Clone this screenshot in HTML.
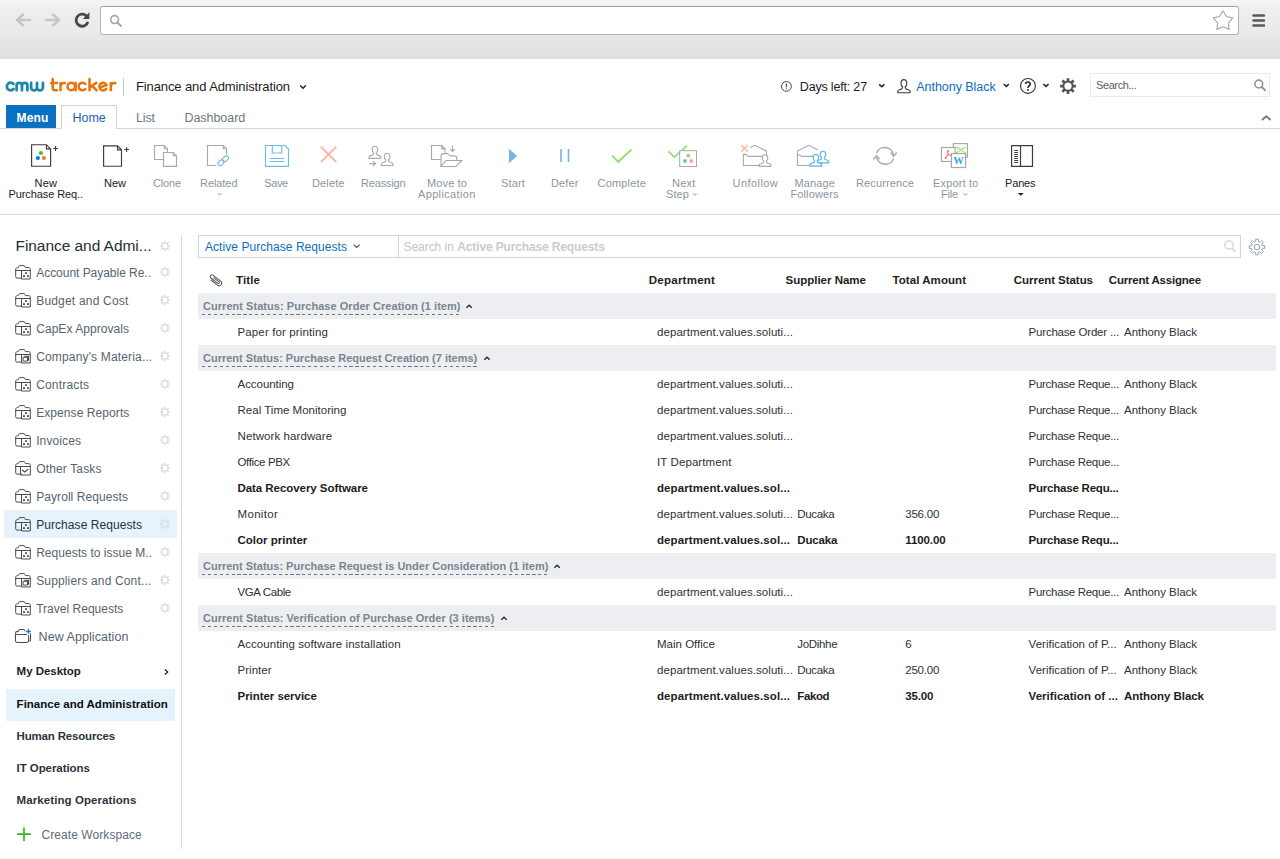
<!DOCTYPE html>
<html><head><meta charset="utf-8"><title>CMW Tracker</title>
<style>
html,body{margin:0;padding:0;}
body{width:1280px;height:859px;position:relative;overflow:hidden;background:#fff;font-family:"Liberation Sans",sans-serif;}
.t{position:absolute;white-space:nowrap;font-family:"Liberation Sans",sans-serif;}
.a{position:absolute;}
svg{position:absolute;overflow:visible;}
#chrome{left:0;top:0;width:1280px;height:59px;background:linear-gradient(#f6f6f6 0px,#f3f3f3 5px,#eeeeee 7px,#ebebeb 30px,#e4e4e4 42px,#e0e0e0 59px);}
#url{left:100px;top:6px;width:1136.5px;height:27px;background:#fff;border:1px solid #b4b4b4;border-top-color:#a2a2a2;border-radius:3px;}
.grp{left:198px;width:1078px;height:26px;background:#edeef2;}
.dash{height:1px;background:repeating-linear-gradient(90deg,#70767c 0,#70767c 3.2px,transparent 3.2px,transparent 5.9px);}
.hl{background:#e6f3fc;}

</style></head><body>
<div class="a" id="chrome"></div>
<div class="a" id="url"></div>
<svg style="left:14px;top:12px" width="18" height="16" viewBox="0 0 18 16"><path d="M9 2.5 L3 8 L9 13.5 M3.2 8 H16" fill="none" stroke="#c6c6c6" stroke-width="2.5" stroke-linecap="round" stroke-linejoin="round"/></svg>
<svg style="left:44px;top:12px" width="18" height="16" viewBox="0 0 18 16"><path d="M9 2.5 L15 8 L9 13.5 M14.8 8 H2" fill="none" stroke="#c6c6c6" stroke-width="2.5" stroke-linecap="round" stroke-linejoin="round"/></svg>
<svg style="left:72.6px;top:11.3px" width="18" height="18" viewBox="0 0 18 18"><path d="M13.4 5.0 A6 6 0 1 0 14.9 10.8" fill="none" stroke="#474747" stroke-width="2.8"/><path d="M9.8 7.9 L16.4 7.9 L16.4 1.3 Z" fill="#474747"/></svg>
<svg style="left:109px;top:14px" width="14" height="14" viewBox="0 0 14 14"><circle cx="5.6" cy="5.6" r="3.9" fill="none" stroke="#a9a9a9" stroke-width="1.7"/><path d="M8.6 8.6 L12 12" stroke="#a9a9a9" stroke-width="2" stroke-linecap="round"/></svg>
<svg style="left:1212px;top:9px" width="22" height="22" viewBox="0 0 22 22"><path d="M11.0 1.8 L14.4 7.5 L20.8 8.9 L16.4 13.9 L17.1 20.4 L11.0 17.8 L4.9 20.4 L5.6 13.9 L1.2 8.9 L7.6 7.5 Z" fill="#fff" stroke="#a6abaf" stroke-width="1.15" stroke-linejoin="round"/></svg>
<svg style="left:1252px;top:13px" width="14" height="14" viewBox="0 0 14 14"><path d="M1.5 2.5 H11.9 M1.5 7.5 H11.9 M1.5 12.5 H11.9" stroke="#595959" stroke-width="2.6" stroke-linecap="round"/></svg>
<svg style="left:0;top:72px" width="130" height="30" viewBox="0 72 130 30" fill="none" stroke-width="2.55" stroke-linecap="round" stroke-linejoin="round"><g stroke="#1b8aa9" stroke-width="2.75"><path d="M13.5 84 A3.8 3.8 0 1 0 13.5 89"/><path d="M16.6 90.3 V85.5 A2.7 2.7 0 0 1 22 85.5 V90.3 M22 85.5 A2.7 2.7 0 0 1 27.4 85.5 V90.3"/><path d="M31.1 82.8 V87.4 A2.95 2.95 0 0 0 37 87.4 V82.8 M37 87.4 A2.95 2.95 0 0 0 42.9 87.4 V82.8"/></g><g stroke="#e9730e"><path d="M52.7 79 V87.8 A2.5 2.5 0 0 0 55.2 90.3 H56.8 M51.2 83 H57"/><path d="M60.5 90.3 V82.9 M60.5 86.6 C60.5 84.2 62.4 82.6 65 83.1"/><circle cx="71.3" cy="86.5" r="3.8"/><path d="M75.6 82.8 V90.3"/><path d="M85.3 84 A3.8 3.8 0 1 0 85.3 89"/><path d="M89.5 79 V90.3 M96.3 82.9 L90 87.1 M92.3 85.9 L96.6 90.3"/><path d="M99.7 87.6 L106.6 85.1 A3.8 3.8 0 1 0 106.3 88.8"/><path d="M110.8 90.3 V82.9 M110.8 86.6 C110.8 84.2 112.7 82.6 115.3 83.1"/></g></svg>
<div class="a" style="left:123px;top:78px;width:1px;height:18px;background:#c9c9c9"></div>
<svg style="left:299px;top:84px" width="8" height="6" viewBox="0 0 8 6"><path d="M1.2 1.5 L4 4.2 L6.8 1.5" fill="none" stroke="#222" stroke-width="1.5"/></svg>
<div class="a" style="left:1090px;top:73px;width:178px;height:22px;border:1px solid #e0ebf7;background:#fff"></div>
<svg style="left:770px;top:70px" width="510" height="60" viewBox="770 70 510 60" fill="none"><circle cx="786.4" cy="86.4" r="4.9" stroke="#444" stroke-width="1"/><path d="M786.4 83.5 V87.3 M786.4 88.6 V89.6" stroke="#444" stroke-width="1.1"/><path d="M879.2 84.4 L881.8 86.8 L884.4 84.4" stroke="#222" stroke-width="1.5"/><path d="M1003.7 84 L1006.3 86.4 L1008.9 84" stroke="#222" stroke-width="1.5"/><path d="M1043.4 84 L1046 86.4 L1048.6 84" stroke="#222" stroke-width="1.5"/><g transform="translate(903.9 79.7) scale(1.04 1.07)"><path d="M-1.4 7.4 v-1 c-0.9 -0.6 -1.4 -1.8 -1.4 -3.1 c0 -1.9 1.1 -3.3 2.8 -3.3 s2.8 1.4 2.8 3.3 c0 1.3 -0.5 2.5 -1.4 3.1 v1 c0 0.9 0.6 1.3 1.6 1.6 l1.4 0.4 c1 0.3 1.5 0.8 1.5 1.7 v1.1 h-11.8 v-1.1 c0 -0.9 0.5 -1.4 1.5 -1.7 l1.4 -0.4 c1 -0.3 1.6 -0.7 1.6 -1.6 z" stroke="#3a3a3a" stroke-width="1.1"/></g><circle cx="1027.95" cy="85.95" r="7.4" stroke="#333" stroke-width="1.1"/><path d="M1025.6 84.1 C1025.6 81.3 1030.2 81.3 1030.2 84 C1030.2 85.9 1027.9 86 1027.9 88.1" stroke="#2e2e2e" stroke-width="1.7"/><circle cx="1027.9" cy="90.1" r="1" fill="#2e2e2e"/><g transform="translate(1068 86.1)" stroke="#505050"><circle r="4.6" stroke-width="1.9"/><path d="M0 -7.9 V-5 M0 7.9 V5 M-7.9 0 H-5 M7.9 0 H5 M-5.6 -5.6 L-3.55 -3.55 M5.6 5.6 L3.55 3.55 M-5.6 5.6 L-3.55 3.55 M5.6 -5.6 L3.55 -3.55" stroke-width="2.7"/></g><circle cx="1258.8" cy="84" r="3.9" stroke="#959595" stroke-width="1.6"/><path d="M1261.8 87 L1265 90.3" stroke="#959595" stroke-width="2" stroke-linecap="round"/><path d="M1262 120 L1266.3 116.3 L1270.6 120" stroke="#7a7a7a" stroke-width="2"/></svg>
<div class="a" style="left:0;top:128px;width:1280px;height:1px;background:#cfd8de"></div>
<div class="a" style="left:6px;top:105.3px;width:50px;height:22.7px;background:#0b70c0"></div>
<div class="a" style="left:61px;top:105px;width:54px;height:23px;border:1px solid #c9d4db;border-bottom:none;background:#fff"></div>
<div class="a" style="left:0;top:214px;width:1280px;height:1px;background:#d4dce1"></div>
<svg style="left:0;top:129px" width="1280" height="86" viewBox="0 129 1280 86" fill="none" stroke-linejoin="miter"><path d="M216.7 193.3 h6 l-3 2.5 z" fill="#c4cace"/><path d="M692 193.5 h6 l-3 2.6 z" fill="#c4cace"/><path d="M962.5 193.5 h6 l-3 2.6 z" fill="#c4cace"/><path d="M1017.6 193.1 h6.2 l-3.1 2.6 z" fill="#222"/><path d="M31.6 144.7 H46.4 L50.6 148.9 V166.2 H31.6 Z M46.4 144.7 V148.9 H50.6" stroke="#3d3d3d" stroke-width="1.15"/><path d="M53.1 148.5 h4.9 M55.55 146 v5" stroke="#3d3d3d" stroke-width="1.05"/><circle cx="40.9" cy="153" r="2.1" fill="#40c41c"/><circle cx="37.9" cy="158" r="2.1" fill="#0b80ca"/><circle cx="43.9" cy="158" r="2.1" fill="#e97b42"/><path d="M103.6 145.8 H117.5 L121.5 149.8 V166.2 H103.6 Z M117.5 145.8 V149.8 H121.5" stroke="#3d3d3d" stroke-width="1.15"/><path d="M124.2 149.5 h4.9 M126.65 147 v5" stroke="#3d3d3d" stroke-width="1.05"/><path d="M154.5 145.5 H164.3 L167.5 148.7 V159.5 H154.5 Z M164.3 145.5 V148.7 H167.5" stroke="#a9a9a9" stroke-width="1.15"/><path d="M163.5 152.5 H173.3 L176.5 155.7 V166.4 H163.5 Z M173.3 152.5 V155.7 H176.5" stroke="#a9a9a9" stroke-width="1.15" fill="#fff"/><path d="M216 165.5 H207.5 V145.5 H223.3 L226.5 148.7 V154.5 M223.3 145.5 V148.7 H226.5" stroke="#a9a9a9" stroke-width="1.15"/><g stroke="#5ab4ea" stroke-width="0.95"><rect x="217.6" y="160.5" width="6.6" height="4.4" rx="2.2" transform="rotate(-42 220.9 162.7)"/><rect x="222.1" y="156.6" width="6.6" height="4.4" rx="2.2" transform="rotate(-42 225.4 158.8)"/></g><path d="M265.5 145.5 H285 L288.5 149.2 V166.3 H265.5 Z" stroke="#6dbdea" stroke-width="1.15"/><path d="M272.3 145.5 V153 H281.7 V145.5 M269.8 158.5 H284.1 M269.8 161.5 H284.1" stroke="#6dbdea" stroke-width="1.1"/><path d="M320.9 146.7 L336.3 162.1 M336.3 146.7 L320.9 162.1" stroke="#fcb59e" stroke-width="1.9"/><g stroke="#a9a9a9" stroke-width="1.1"><path d="M373.55 153.6 v-1 c-0.9 -0.6 -1.4 -1.8 -1.4 -3.1 c0 -1.9 1.1 -3.3 2.8 -3.3 s2.8 1.4 2.8 3.3 c0 1.3 -0.5 2.5 -1.4 3.1 v1 c0 0.9 0.6 1.3 1.6 1.6 l1.4 0.4 c1 0.3 1.5 0.8 1.5 1.7 v1.1 h-11.8 v-1.1 c0 -0.9 0.5 -1.4 1.5 -1.7 l1.4 -0.4 c1 -0.3 1.6 -0.7 1.6 -1.6 z"/><path d="M385.7 160.7 v-1 c-0.9 -0.6 -1.4 -1.8 -1.4 -3.1 c0 -1.9 1.1 -3.3 2.8 -3.3 s2.8 1.4 2.8 3.3 c0 1.3 -0.5 2.5 -1.4 3.1 v1 c0 0.9 0.6 1.3 1.6 1.6 l1.4 0.4 c1 0.3 1.5 0.8 1.5 1.7 v1.1 h-11.8 v-1.1 c0 -0.9 0.5 -1.4 1.5 -1.7 l1.4 -0.4 c1 -0.3 1.6 -0.7 1.6 -1.6 z"/><path d="M369.2 163.6 h6.4 M373 161.2 l2.6 2.4 l-2.6 2.4"/></g><g stroke="#a9a9a9" stroke-width="1.15"><path d="M441 159.5 H431.5 V145.5 H441.7 L445 148.8 V152.8 M441.7 145.5 V148.8 H445"/><path d="M441 166.5 V156.5 C441 154.6 442.4 153.6 444 153.6 H447 C448.6 153.6 448.8 155.9 450.4 155.9 H454.5 C456 155.9 456.8 156.8 456.8 158.4 V160.3" fill="#fff"/><path d="M441 166.5 L445.8 160.5 H461.8 L455.8 166.5 Z" fill="#fff"/><path d="M452.5 145.5 V151.3 M450.2 149.2 L452.5 151.5 L454.8 149.2"/></g><path d="M509 149 L517.2 156 L509 163 Z" fill="#6db8e4"/><path d="M561 149 V162 M568.5 149 V162" stroke="#6db8e4" stroke-width="1.6"/><path d="M612.2 155.6 L618.2 161.8 L631.4 149.6" stroke="#90de6c" stroke-width="1.9"/><path d="M668.3 151.4 L674.4 157.2 L687.2 145.6" stroke="#90de6c" stroke-width="1.7"/><rect x="679.7" y="150.7" width="16.8" height="15.8" fill="#fff" stroke="#a9a9a9" stroke-width="1"/><circle cx="688.2" cy="155.7" r="1.9" fill="#8fdd6c"/><circle cx="685" cy="161" r="1.9" fill="#6db8e4"/><circle cx="691.3" cy="161" r="1.9" fill="#f8a98f"/><path d="M741.2 145.2 l6.6 6.6 M747.8 145.2 l-6.6 6.6" stroke="#fbb29a" stroke-width="1.3"/><g stroke="#a9a9a9" stroke-width="1.1"><path d="M750.2 147.6 L754.9 145.3 L766.5 151.2 V155"/><path d="M760 165.5 H743.4 V154.4 H745.9 L748.4 156.4 H762"/><path d="M765 154.8 m-1.4 7 v-0.9 c-0.9 -0.6 -1.4 -1.7 -1.4 -3 c0 -1.8 1.1 -3.1 2.8 -3.1 s2.8 1.3 2.8 3.1 c0 1.3 -0.5 2.4 -1.4 3 v0.9 c0 0.9 0.6 1.2 1.6 1.5 l1.4 0.4 c1 0.3 1.5 0.8 1.5 1.7 v1 h-11.8 v-1 c0 -0.9 0.5 -1.4 1.5 -1.7 l1.4 -0.4 c1 -0.3 1.6 -0.6 1.6 -1.5 z" fill="#fff"/></g><g stroke="#a9a9a9" stroke-width="1.1"><path d="M817.8 150 L808.9 145.3 L797.4 151 V165.5 H811"/><path d="M797.4 154.3 L802.2 156.4 H813.5"/></g><g stroke="#5db2e8" stroke-width="1.1" fill="#fff"><path d="M823 151.3 m-1.4 7 v-0.9 c-0.9 -0.6 -1.4 -1.7 -1.4 -3 c0 -1.8 1.1 -3.1 2.8 -3.1 s2.8 1.3 2.8 3.1 c0 1.3 -0.5 2.4 -1.4 3 v0.9 c0 0.9 0.6 1.2 1.6 1.5 l1.4 0.4 c1 0.3 1.5 0.8 1.5 1.7 v1 h-11.8 v-1 c0 -0.9 0.5 -1.4 1.5 -1.7 l1.4 -0.4 c1 -0.3 1.6 -0.6 1.6 -1.5 z"/><path d="M815.9 154.5 m-1.4 7 v-0.9 c-0.9 -0.6 -1.4 -1.7 -1.4 -3 c0 -1.8 1.1 -3.1 2.8 -3.1 s2.8 1.3 2.8 3.1 c0 1.3 -0.5 2.4 -1.4 3 v0.9 c0 0.9 0.6 1.2 1.6 1.5 l1.4 0.4 c1 0.3 1.5 0.8 1.5 1.7 v1 h-11.8 v-1 c0 -0.9 0.5 -1.4 1.5 -1.7 l1.4 -0.4 c1 -0.3 1.6 -0.6 1.6 -1.5 z"/></g><g stroke="#adb1b4" stroke-width="1.6"><path d="M876.4 153.2 A9 9 0 0 1 893.7 155.6 M893.6 158.6 A9 9 0 0 1 876.3 156.2"/><path d="M890.6 152.6 L893.7 156.2 L896.8 152.6 M873.3 159.2 L876.4 155.6 L879.6 159.2"/></g><rect x="953.4" y="143.6" width="14" height="13.6" fill="#fff" stroke="#a9a9a9" stroke-width="1.2"/><path d="M956.6 147.4 L964.8 152.8 M964.8 147.4 L956.6 152.8 M955.8 147.3 h2.4 M963.4 147.3 h2.4 M955.8 152.9 h2.4 M963.4 152.9 h2.4" stroke="#9be27a" stroke-width="1.3"/><rect x="941.5" y="147.5" width="13.6" height="14" fill="#fff" stroke="#a9a9a9" stroke-width="1.2"/><path d="M947.9 150.8 V154.3 L945.5 158.2 M947.9 154.3 L951 155.7" stroke="#f26d6d" stroke-width="1.1" fill="none"/><circle cx="947.9" cy="150.9" r="0.9" fill="#f26d6d"/><circle cx="945.6" cy="158.1" r="1" fill="#f26d6d"/><rect x="951.4" y="153.6" width="14.2" height="13.9" fill="#fff" stroke="#a9a9a9" stroke-width="1.2"/><path d="M1011.6 145.6 H1032.5 V166.4 H1011.6 Z M1020.5 145.6 V166.4" stroke="#3d3d3d" stroke-width="1.2"/><path d="M1014.2 150.5 h3.9 M1014.2 152.5 h3.9 M1014.2 154.5 h3.9 M1014.2 156.5 h3.9 M1014.2 158.5 h3.9 M1014.2 160.5 h3.9 M1014.2 162.5 h3.9" stroke="#3d3d3d" stroke-width="1"/></svg>
<div class="a" style="left:181px;top:235px;width:1px;height:614px;background:#d0d6da"></div>
<div class="a hl" style="left:4px;top:510px;width:173px;height:28px"></div>
<div class="a hl" style="left:6px;top:689px;width:169px;height:32px"></div>
<svg style="left:0;top:235px" width="181" height="624" viewBox="0 235 181 624"><g transform="translate(165 246)" fill="none" stroke="#dcdcdc"><circle r="3.1" stroke-width="1.3"/><path d="M0 -5.2 V-3.4 M0 5.2 V3.4 M-5.2 0 H-3.4 M5.2 0 H3.4 M-3.7 -3.7 L-2.4 -2.4 M3.7 3.7 L2.4 2.4 M-3.7 3.7 L-2.4 2.4 M3.7 -3.7 L2.4 -2.4" stroke-width="1.5"/></g><g transform="translate(15.2 265.10)" fill="none" stroke="#4b4b4b" stroke-width="1" stroke-linejoin="round" stroke-linecap="round"><path d="M0.5 5.4 V4.3 C0.5 3.2 1.2 2.5 2.3 2.5 H2.9 C4 2.5 3.3 0.5 4.7 0.5 H8.7 C10.1 0.5 9.4 2.5 10.5 2.5 H13.4 C14.5 2.5 15.1 3.2 15.1 4.3 V5.4"/><path d="M0.5 5.4 H15.1"/><path d="M0.5 5.4 V11.6 C0.5 12.5 1 13 1.9 13 H6.3"/><path d="M6.3 5.4 V13.9 H15.1 V5.4"/><g fill="#333" stroke="none"><rect x="9.9" y="7.1" width="1.8" height="1.8" rx="0.4"/><rect x="7.9" y="10.1" width="1.8" height="1.8" rx="0.4"/><rect x="11.9" y="10.1" width="1.8" height="1.8" rx="0.4"/></g></g><g transform="translate(165 272)" fill="none" stroke="#dcdcdc"><circle r="3.1" stroke-width="1.3"/><path d="M0 -5.2 V-3.4 M0 5.2 V3.4 M-5.2 0 H-3.4 M5.2 0 H3.4 M-3.7 -3.7 L-2.4 -2.4 M3.7 3.7 L2.4 2.4 M-3.7 3.7 L-2.4 2.4 M3.7 -3.7 L2.4 -2.4" stroke-width="1.5"/></g><g transform="translate(15.2 293.10)" fill="none" stroke="#4b4b4b" stroke-width="1" stroke-linejoin="round" stroke-linecap="round"><path d="M0.5 5.4 V4.3 C0.5 3.2 1.2 2.5 2.3 2.5 H2.9 C4 2.5 3.3 0.5 4.7 0.5 H8.7 C10.1 0.5 9.4 2.5 10.5 2.5 H13.4 C14.5 2.5 15.1 3.2 15.1 4.3 V5.4"/><path d="M0.5 5.4 H15.1"/><path d="M0.5 5.4 V11.6 C0.5 12.5 1 13 1.9 13 H6.3"/><path d="M6.3 5.4 V13.9 H15.1 V5.4"/><g fill="#333" stroke="none"><rect x="9.9" y="7.1" width="1.8" height="1.8" rx="0.4"/><rect x="7.9" y="10.1" width="1.8" height="1.8" rx="0.4"/><rect x="11.9" y="10.1" width="1.8" height="1.8" rx="0.4"/></g></g><g transform="translate(165 300)" fill="none" stroke="#dcdcdc"><circle r="3.1" stroke-width="1.3"/><path d="M0 -5.2 V-3.4 M0 5.2 V3.4 M-5.2 0 H-3.4 M5.2 0 H3.4 M-3.7 -3.7 L-2.4 -2.4 M3.7 3.7 L2.4 2.4 M-3.7 3.7 L-2.4 2.4 M3.7 -3.7 L2.4 -2.4" stroke-width="1.5"/></g><g transform="translate(15.2 321.10)" fill="none" stroke="#4b4b4b" stroke-width="1" stroke-linejoin="round" stroke-linecap="round"><path d="M0.5 5.4 V4.3 C0.5 3.2 1.2 2.5 2.3 2.5 H2.9 C4 2.5 3.3 0.5 4.7 0.5 H8.7 C10.1 0.5 9.4 2.5 10.5 2.5 H13.4 C14.5 2.5 15.1 3.2 15.1 4.3 V5.4"/><path d="M0.5 5.4 H15.1"/><path d="M0.5 5.4 V11.6 C0.5 12.5 1 13 1.9 13 H6.3"/><path d="M6.3 5.4 V13.9 H15.1 V5.4"/><g fill="#333" stroke="none"><rect x="9.9" y="7.1" width="1.8" height="1.8" rx="0.4"/><rect x="7.9" y="10.1" width="1.8" height="1.8" rx="0.4"/><rect x="11.9" y="10.1" width="1.8" height="1.8" rx="0.4"/></g></g><g transform="translate(165 328)" fill="none" stroke="#dcdcdc"><circle r="3.1" stroke-width="1.3"/><path d="M0 -5.2 V-3.4 M0 5.2 V3.4 M-5.2 0 H-3.4 M5.2 0 H3.4 M-3.7 -3.7 L-2.4 -2.4 M3.7 3.7 L2.4 2.4 M-3.7 3.7 L-2.4 2.4 M3.7 -3.7 L2.4 -2.4" stroke-width="1.5"/></g><g transform="translate(15.2 349.10)" fill="none" stroke="#4b4b4b" stroke-width="1" stroke-linejoin="round" stroke-linecap="round"><path d="M0.5 5.4 V4.3 C0.5 3.2 1.2 2.5 2.3 2.5 H2.9 C4 2.5 3.3 0.5 4.7 0.5 H8.7 C10.1 0.5 9.4 2.5 10.5 2.5 H13.4 C14.5 2.5 15.1 3.2 15.1 4.3 V5.4"/><path d="M0.5 5.4 H15.1"/><path d="M0.5 5.4 V11.6 C0.5 12.5 1 13 1.9 13 H6.3"/><path d="M6.3 5.4 V13.9 H15.1 V5.4"/><path d="M8.3 8.2 H12.3 V12 H8.3 Z" stroke-width="1"/><path d="M9.3 7.2 H13.3 V11.2" stroke-width="1.1" stroke-linejoin="miter"/><path d="M12.8 7.6 V11.4" stroke-width="0.9"/></g><g transform="translate(165 356)" fill="none" stroke="#dcdcdc"><circle r="3.1" stroke-width="1.3"/><path d="M0 -5.2 V-3.4 M0 5.2 V3.4 M-5.2 0 H-3.4 M5.2 0 H3.4 M-3.7 -3.7 L-2.4 -2.4 M3.7 3.7 L2.4 2.4 M-3.7 3.7 L-2.4 2.4 M3.7 -3.7 L2.4 -2.4" stroke-width="1.5"/></g><g transform="translate(15.2 377.10)" fill="none" stroke="#4b4b4b" stroke-width="1" stroke-linejoin="round" stroke-linecap="round"><path d="M0.5 5.4 V4.3 C0.5 3.2 1.2 2.5 2.3 2.5 H2.9 C4 2.5 3.3 0.5 4.7 0.5 H8.7 C10.1 0.5 9.4 2.5 10.5 2.5 H13.4 C14.5 2.5 15.1 3.2 15.1 4.3 V5.4"/><path d="M0.5 5.4 H15.1"/><path d="M0.5 5.4 V11.6 C0.5 12.5 1 13 1.9 13 H6.3"/><path d="M6.3 5.4 V13.9 H15.1 V5.4"/><g fill="#333" stroke="none"><rect x="9.9" y="7.1" width="1.8" height="1.8" rx="0.4"/><rect x="7.9" y="10.1" width="1.8" height="1.8" rx="0.4"/><rect x="11.9" y="10.1" width="1.8" height="1.8" rx="0.4"/></g></g><g transform="translate(165 384)" fill="none" stroke="#dcdcdc"><circle r="3.1" stroke-width="1.3"/><path d="M0 -5.2 V-3.4 M0 5.2 V3.4 M-5.2 0 H-3.4 M5.2 0 H3.4 M-3.7 -3.7 L-2.4 -2.4 M3.7 3.7 L2.4 2.4 M-3.7 3.7 L-2.4 2.4 M3.7 -3.7 L2.4 -2.4" stroke-width="1.5"/></g><g transform="translate(15.2 405.10)" fill="none" stroke="#4b4b4b" stroke-width="1" stroke-linejoin="round" stroke-linecap="round"><path d="M0.5 5.4 V4.3 C0.5 3.2 1.2 2.5 2.3 2.5 H2.9 C4 2.5 3.3 0.5 4.7 0.5 H8.7 C10.1 0.5 9.4 2.5 10.5 2.5 H13.4 C14.5 2.5 15.1 3.2 15.1 4.3 V5.4"/><path d="M0.5 5.4 H15.1"/><path d="M0.5 5.4 V11.6 C0.5 12.5 1 13 1.9 13 H6.3"/><path d="M6.3 5.4 V13.9 H15.1 V5.4"/><g fill="#333" stroke="none"><rect x="9.9" y="7.1" width="1.8" height="1.8" rx="0.4"/><rect x="7.9" y="10.1" width="1.8" height="1.8" rx="0.4"/><rect x="11.9" y="10.1" width="1.8" height="1.8" rx="0.4"/></g></g><g transform="translate(165 412)" fill="none" stroke="#dcdcdc"><circle r="3.1" stroke-width="1.3"/><path d="M0 -5.2 V-3.4 M0 5.2 V3.4 M-5.2 0 H-3.4 M5.2 0 H3.4 M-3.7 -3.7 L-2.4 -2.4 M3.7 3.7 L2.4 2.4 M-3.7 3.7 L-2.4 2.4 M3.7 -3.7 L2.4 -2.4" stroke-width="1.5"/></g><g transform="translate(15.2 433.10)" fill="none" stroke="#4b4b4b" stroke-width="1" stroke-linejoin="round" stroke-linecap="round"><path d="M0.5 5.4 V4.3 C0.5 3.2 1.2 2.5 2.3 2.5 H2.9 C4 2.5 3.3 0.5 4.7 0.5 H8.7 C10.1 0.5 9.4 2.5 10.5 2.5 H13.4 C14.5 2.5 15.1 3.2 15.1 4.3 V5.4"/><path d="M0.5 5.4 H15.1"/><path d="M0.5 5.4 V11.6 C0.5 12.5 1 13 1.9 13 H6.3"/><path d="M6.3 5.4 V13.9 H15.1 V5.4"/><g fill="#333" stroke="none"><rect x="9.9" y="7.1" width="1.8" height="1.8" rx="0.4"/><rect x="7.9" y="10.1" width="1.8" height="1.8" rx="0.4"/><rect x="11.9" y="10.1" width="1.8" height="1.8" rx="0.4"/></g></g><g transform="translate(165 440)" fill="none" stroke="#dcdcdc"><circle r="3.1" stroke-width="1.3"/><path d="M0 -5.2 V-3.4 M0 5.2 V3.4 M-5.2 0 H-3.4 M5.2 0 H3.4 M-3.7 -3.7 L-2.4 -2.4 M3.7 3.7 L2.4 2.4 M-3.7 3.7 L-2.4 2.4 M3.7 -3.7 L2.4 -2.4" stroke-width="1.5"/></g><g transform="translate(15.2 461.10)" fill="none" stroke="#4b4b4b" stroke-width="1" stroke-linejoin="round" stroke-linecap="round"><path d="M0.5 5.4 V4.3 C0.5 3.2 1.2 2.5 2.3 2.5 H2.9 C4 2.5 3.3 0.5 4.7 0.5 H8.7 C10.1 0.5 9.4 2.5 10.5 2.5 H13.4 C14.5 2.5 15.1 3.2 15.1 4.3 V5.4"/><path d="M0.5 5.4 H15.1"/><path d="M0.5 5.4 V11.6 C0.5 12.5 1 13 1.9 13 H6.3"/><path d="M5.3 5.4 V13.9 H15.1 V5.4"/><path d="M7.2 8.9 L9.5 10.9 L12.8 8.2" stroke-width="1.1"/></g><g transform="translate(165 468)" fill="none" stroke="#dcdcdc"><circle r="3.1" stroke-width="1.3"/><path d="M0 -5.2 V-3.4 M0 5.2 V3.4 M-5.2 0 H-3.4 M5.2 0 H3.4 M-3.7 -3.7 L-2.4 -2.4 M3.7 3.7 L2.4 2.4 M-3.7 3.7 L-2.4 2.4 M3.7 -3.7 L2.4 -2.4" stroke-width="1.5"/></g><g transform="translate(15.2 489.10)" fill="none" stroke="#4b4b4b" stroke-width="1" stroke-linejoin="round" stroke-linecap="round"><path d="M0.5 5.4 V4.3 C0.5 3.2 1.2 2.5 2.3 2.5 H2.9 C4 2.5 3.3 0.5 4.7 0.5 H8.7 C10.1 0.5 9.4 2.5 10.5 2.5 H13.4 C14.5 2.5 15.1 3.2 15.1 4.3 V5.4"/><path d="M0.5 5.4 H15.1"/><path d="M0.5 5.4 V11.6 C0.5 12.5 1 13 1.9 13 H6.3"/><path d="M6.3 5.4 V13.9 H15.1 V5.4"/><g fill="#333" stroke="none"><rect x="9.9" y="7.1" width="1.8" height="1.8" rx="0.4"/><rect x="7.9" y="10.1" width="1.8" height="1.8" rx="0.4"/><rect x="11.9" y="10.1" width="1.8" height="1.8" rx="0.4"/></g></g><g transform="translate(165 496)" fill="none" stroke="#dcdcdc"><circle r="3.1" stroke-width="1.3"/><path d="M0 -5.2 V-3.4 M0 5.2 V3.4 M-5.2 0 H-3.4 M5.2 0 H3.4 M-3.7 -3.7 L-2.4 -2.4 M3.7 3.7 L2.4 2.4 M-3.7 3.7 L-2.4 2.4 M3.7 -3.7 L2.4 -2.4" stroke-width="1.5"/></g><g transform="translate(15.2 517.10)" fill="none" stroke="#4b4b4b" stroke-width="1" stroke-linejoin="round" stroke-linecap="round"><path d="M0.5 5.4 V4.3 C0.5 3.2 1.2 2.5 2.3 2.5 H2.9 C4 2.5 3.3 0.5 4.7 0.5 H8.7 C10.1 0.5 9.4 2.5 10.5 2.5 H13.4 C14.5 2.5 15.1 3.2 15.1 4.3 V5.4"/><path d="M0.5 5.4 H15.1"/><path d="M0.5 5.4 V11.6 C0.5 12.5 1 13 1.9 13 H6.3"/><path d="M6.3 5.4 V13.9 H15.1 V5.4"/><g fill="#333" stroke="none"><rect x="9.9" y="7.1" width="1.8" height="1.8" rx="0.4"/><rect x="7.9" y="10.1" width="1.8" height="1.8" rx="0.4"/><rect x="11.9" y="10.1" width="1.8" height="1.8" rx="0.4"/></g></g><g transform="translate(165 524)" fill="none" stroke="#dcdcdc"><circle r="3.1" stroke-width="1.3"/><path d="M0 -5.2 V-3.4 M0 5.2 V3.4 M-5.2 0 H-3.4 M5.2 0 H3.4 M-3.7 -3.7 L-2.4 -2.4 M3.7 3.7 L2.4 2.4 M-3.7 3.7 L-2.4 2.4 M3.7 -3.7 L2.4 -2.4" stroke-width="1.5"/></g><g transform="translate(15.2 545.10)" fill="none" stroke="#4b4b4b" stroke-width="1" stroke-linejoin="round" stroke-linecap="round"><path d="M0.5 5.4 V4.3 C0.5 3.2 1.2 2.5 2.3 2.5 H2.9 C4 2.5 3.3 0.5 4.7 0.5 H8.7 C10.1 0.5 9.4 2.5 10.5 2.5 H13.4 C14.5 2.5 15.1 3.2 15.1 4.3 V5.4"/><path d="M0.5 5.4 H15.1"/><path d="M0.5 5.4 V11.6 C0.5 12.5 1 13 1.9 13 H6.3"/><path d="M6.3 5.4 V13.9 H15.1 V5.4"/><g fill="#333" stroke="none"><rect x="9.9" y="7.1" width="1.8" height="1.8" rx="0.4"/><rect x="7.9" y="10.1" width="1.8" height="1.8" rx="0.4"/><rect x="11.9" y="10.1" width="1.8" height="1.8" rx="0.4"/></g></g><g transform="translate(165 552)" fill="none" stroke="#dcdcdc"><circle r="3.1" stroke-width="1.3"/><path d="M0 -5.2 V-3.4 M0 5.2 V3.4 M-5.2 0 H-3.4 M5.2 0 H3.4 M-3.7 -3.7 L-2.4 -2.4 M3.7 3.7 L2.4 2.4 M-3.7 3.7 L-2.4 2.4 M3.7 -3.7 L2.4 -2.4" stroke-width="1.5"/></g><g transform="translate(15.2 573.10)" fill="none" stroke="#4b4b4b" stroke-width="1" stroke-linejoin="round" stroke-linecap="round"><path d="M0.5 5.4 V4.3 C0.5 3.2 1.2 2.5 2.3 2.5 H2.9 C4 2.5 3.3 0.5 4.7 0.5 H8.7 C10.1 0.5 9.4 2.5 10.5 2.5 H13.4 C14.5 2.5 15.1 3.2 15.1 4.3 V5.4"/><path d="M0.5 5.4 H15.1"/><path d="M0.5 5.4 V11.6 C0.5 12.5 1 13 1.9 13 H6.3"/><path d="M6.3 5.4 V13.9 H15.1 V5.4"/><path d="M8.3 8.2 H12.3 V12 H8.3 Z" stroke-width="1"/><path d="M9.3 7.2 H13.3 V11.2" stroke-width="1.1" stroke-linejoin="miter"/><path d="M12.8 7.6 V11.4" stroke-width="0.9"/></g><g transform="translate(165 580)" fill="none" stroke="#dcdcdc"><circle r="3.1" stroke-width="1.3"/><path d="M0 -5.2 V-3.4 M0 5.2 V3.4 M-5.2 0 H-3.4 M5.2 0 H3.4 M-3.7 -3.7 L-2.4 -2.4 M3.7 3.7 L2.4 2.4 M-3.7 3.7 L-2.4 2.4 M3.7 -3.7 L2.4 -2.4" stroke-width="1.5"/></g><g transform="translate(15.2 601.10)" fill="none" stroke="#4b4b4b" stroke-width="1" stroke-linejoin="round" stroke-linecap="round"><path d="M0.5 5.4 V4.3 C0.5 3.2 1.2 2.5 2.3 2.5 H2.9 C4 2.5 3.3 0.5 4.7 0.5 H8.7 C10.1 0.5 9.4 2.5 10.5 2.5 H13.4 C14.5 2.5 15.1 3.2 15.1 4.3 V5.4"/><path d="M0.5 5.4 H15.1"/><path d="M0.5 5.4 V11.6 C0.5 12.5 1 13 1.9 13 H6.3"/><path d="M6.3 5.4 V13.9 H15.1 V5.4"/><g fill="#333" stroke="none"><rect x="9.9" y="7.1" width="1.8" height="1.8" rx="0.4"/><rect x="7.9" y="10.1" width="1.8" height="1.8" rx="0.4"/><rect x="11.9" y="10.1" width="1.8" height="1.8" rx="0.4"/></g></g><g transform="translate(165 608)" fill="none" stroke="#dcdcdc"><circle r="3.1" stroke-width="1.3"/><path d="M0 -5.2 V-3.4 M0 5.2 V3.4 M-5.2 0 H-3.4 M5.2 0 H3.4 M-3.7 -3.7 L-2.4 -2.4 M3.7 3.7 L2.4 2.4 M-3.7 3.7 L-2.4 2.4 M3.7 -3.7 L2.4 -2.4" stroke-width="1.5"/></g><g fill="none" stroke="#4b4b4b" stroke-width="1.05" stroke-linejoin="round" stroke-linecap="round"><path d="M15.45 633.2 V632.9 C15.45 632 16 631.6 17 631.6 H17.8 C18.5 631.6 18.5 629.5 19.6 629.5 H23.4 C24.3 629.5 24.7 630.2 24.9 630.9"/><path d="M15.6 634.45 H26.6"/><path d="M15.45 634.2 V640.6 C15.45 641.7 16.1 642.4 17.2 642.4 H26.8 C27.9 642.4 28.6 641.7 28.6 640.6 V635.5"/><path d="M30.5 633.7 V640 C30.5 640.6 30.2 641 29.6 641.2"/></g><path d="M26 631.4 H30.9 M28.45 629 V633.8" stroke="#0b87ca" stroke-width="1.5" fill="none"/><path d="M164.9 669.4 L167.7 672 L164.9 674.6" fill="none" stroke="#222" stroke-width="1.3"/><path d="M17.2 834.2 H30.8 M24 827.5 V841" stroke="#35b51d" stroke-width="1.7" fill="none"/></svg>
<div class="a" style="left:198px;top:235px;width:1041px;height:21px;border:1px solid #c9d6de;background:#fff"></div>
<div class="a" style="left:398px;top:236px;width:1px;height:21px;background:#c9d6de"></div>
<div class="a grp" style="top:293px"></div>
<div class="a dash" style="left:201.6px;top:314px;width:259.8px"></div>
<div class="a grp" style="top:345px"></div>
<div class="a dash" style="left:201.6px;top:366px;width:277.4px"></div>
<div class="a grp" style="top:553px"></div>
<div class="a dash" style="left:201.6px;top:574px;width:347.6px"></div>
<div class="a grp" style="top:605px"></div>
<div class="a dash" style="left:201.6px;top:626px;width:293.4px"></div>
<svg style="left:190px;top:230px" width="1090" height="500" viewBox="190 230 1090 500" fill="none"><path d="M353.6 244.6 L356.6 247.4 L359.6 244.6" stroke="#555" stroke-width="1.2"/><circle cx="1229" cy="245" r="4.2" stroke="#d4d4d4" stroke-width="1.3"/><path d="M1232.1 248.3 L1234.8 251.3" stroke="#d4d4d4" stroke-width="1.7" stroke-linecap="round"/><g transform="translate(1257 247)" stroke="#8d969d" stroke-width="0.9"><circle r="2.8"/><path d="M-1.35 -5.43 L-1.30 -7.79 L1.30 -7.79 L1.35 -5.43 L2.88 -4.80 L4.59 -6.43 L6.43 -4.59 L4.80 -2.88 L5.43 -1.35 L7.79 -1.30 L7.79 1.30 L5.43 1.35 L4.80 2.88 L6.43 4.59 L4.59 6.43 L2.88 4.80 L1.35 5.43 L1.30 7.79 L-1.30 7.79 L-1.35 5.43 L-2.88 4.80 L-4.59 6.43 L-6.43 4.59 L-4.80 2.88 L-5.43 1.35 L-7.79 1.30 L-7.79 -1.30 L-5.43 -1.35 L-4.80 -2.88 L-6.43 -4.59 L-4.59 -6.43 L-2.88 -4.80 Z" stroke-linejoin="round"/></g><g transform="translate(215.6 280.4) rotate(-52)" stroke="#555" stroke-width="1"><path d="M-2.6 -4 V4.4 A2.6 2.6 0 0 0 2.6 4.4 V-5.2 A1.8 1.8 0 0 0 -1 -5.2 V3.6 A1 1 0 0 0 1 3.6 V-3.4"/></g><path d="M466.4 307.7 L469.1 305.3 L471.8 307.7" stroke="#2b2b2b" stroke-width="1.5"/><path d="M484.3 359.7 L487.0 357.3 L489.7 359.7" stroke="#2b2b2b" stroke-width="1.5"/><path d="M554.4 567.7 L557.1 565.3 L559.8 567.7" stroke="#2b2b2b" stroke-width="1.5"/><path d="M501.3 619.7 L504.0 617.3 L506.7 619.7" stroke="#2b2b2b" stroke-width="1.5"/></svg>
<span class="t" style="left:136.00px;top:78.00px;font-size:13px;line-height:18px;color:#1c1c1c;letter-spacing:-0.110px;">Finance and Administration</span>
<span class="t" style="left:799.80px;top:78.00px;font-size:12.5px;line-height:18px;color:#1c1c1c;letter-spacing:-0.183px;">Days left: 27</span>
<span class="t" style="left:916.30px;top:78.00px;font-size:12.5px;line-height:18px;color:#0b6ec2;letter-spacing:-0.042px;">Anthony Black</span>
<span class="t" style="left:1096.00px;top:78.00px;font-size:11px;line-height:15px;color:#5e5e5e;letter-spacing:-0.400px;">Search...</span>
<span class="t" style="left:16.60px;top:110.00px;font-size:12px;line-height:17px;color:#fff;font-weight:700;letter-spacing:0.102px;">Menu</span>
<span class="t" style="left:72.60px;top:109.00px;font-size:12.5px;line-height:18px;color:#1b63b7;letter-spacing:-0.098px;">Home</span>
<span class="t" style="left:136.10px;top:109.00px;font-size:12.5px;line-height:18px;color:#6d7882;letter-spacing:-0.215px;">List</span>
<span class="t" style="left:184.40px;top:109.00px;font-size:12.5px;line-height:18px;color:#6d7882;letter-spacing:-0.042px;">Dashboard</span>
<span class="t" style="left:34.50px;top:176.00px;font-size:11px;line-height:15px;color:#222;letter-spacing:0.194px;">New</span>
<span class="t" style="left:8.50px;top:187.00px;font-size:11px;line-height:15px;color:#222;letter-spacing:-0.098px;">Purchase Req..</span>
<span class="t" style="left:104.00px;top:176.00px;font-size:11px;line-height:15px;color:#222;letter-spacing:-0.006px;">New</span>
<span class="t" style="left:153.00px;top:176.00px;font-size:11px;line-height:15px;color:#8b969f;letter-spacing:-0.167px;">Clone</span>
<span class="t" style="left:200.00px;top:176.00px;font-size:11px;line-height:15px;color:#8b969f;letter-spacing:-0.065px;">Related</span>
<span class="t" style="left:264.30px;top:176.00px;font-size:11px;line-height:15px;color:#8b969f;letter-spacing:-0.400px;">Save</span>
<span class="t" style="left:312.00px;top:176.00px;font-size:11px;line-height:15px;color:#8b969f;letter-spacing:0.128px;">Delete</span>
<span class="t" style="left:361.00px;top:176.00px;font-size:11px;line-height:15px;color:#8b969f;letter-spacing:-0.181px;">Reassign</span>
<span class="t" style="left:427.00px;top:176.00px;font-size:11px;line-height:15px;color:#8b969f;letter-spacing:0.132px;">Move to</span>
<span class="t" style="left:418.00px;top:187.00px;font-size:11px;line-height:15px;color:#8b969f;letter-spacing:0.350px;">Application</span>
<span class="t" style="left:501.00px;top:176.00px;font-size:11px;line-height:15px;color:#8b969f;letter-spacing:0.170px;">Start</span>
<span class="t" style="left:551.00px;top:176.00px;font-size:11px;line-height:15px;color:#8b969f;letter-spacing:0.132px;">Defer</span>
<span class="t" style="left:597.50px;top:176.00px;font-size:11px;line-height:15px;color:#8b969f;letter-spacing:0.190px;">Complete</span>
<span class="t" style="left:672.00px;top:176.00px;font-size:11px;line-height:15px;color:#8b969f;letter-spacing:0.250px;">Next</span>
<span class="t" style="left:666.00px;top:187.00px;font-size:11px;line-height:15px;color:#8b969f;letter-spacing:0.103px;">Step</span>
<span class="t" style="left:732.50px;top:176.00px;font-size:11px;line-height:15px;color:#8b969f;letter-spacing:0.442px;">Unfollow</span>
<span class="t" style="left:794.50px;top:176.00px;font-size:11px;line-height:15px;color:#8b969f;letter-spacing:0.134px;">Manage</span>
<span class="t" style="left:790.50px;top:187.00px;font-size:11px;line-height:15px;color:#8b969f;letter-spacing:0.108px;">Followers</span>
<span class="t" style="left:856.00px;top:176.00px;font-size:11px;line-height:15px;color:#8b969f;letter-spacing:0.120px;">Recurrence</span>
<span class="t" style="left:933.00px;top:176.00px;font-size:11px;line-height:15px;color:#8b969f;letter-spacing:0.173px;">Export to</span>
<span class="t" style="left:941.00px;top:187.00px;font-size:11px;line-height:15px;color:#8b969f;letter-spacing:-0.210px;">File</span>
<span class="t" style="left:1005.00px;top:176.00px;font-size:11px;line-height:15px;color:#222;letter-spacing:-0.156px;">Panes</span>
<span class="t" style="left:953.20px;top:153.00px;font-size:10.5px;line-height:15px;color:#3ba6e0;font-weight:700;letter-spacing:0.700px;font-family:'Liberation Serif',serif;">W</span>
<span class="t" style="left:15.50px;top:235.00px;font-size:15.5px;line-height:22px;color:#272d36;letter-spacing:-0.054px;">Finance and Admi...</span>
<span class="t" style="left:36.20px;top:265.00px;font-size:12px;line-height:17px;color:#56646f;letter-spacing:-0.031px;">Account Payable Re..</span>
<span class="t" style="left:36.20px;top:293.00px;font-size:12px;line-height:17px;color:#56646f;letter-spacing:0.193px;">Budget and Cost</span>
<span class="t" style="left:36.20px;top:321.00px;font-size:12px;line-height:17px;color:#56646f;letter-spacing:0.051px;">CapEx Approvals</span>
<span class="t" style="left:36.20px;top:349.00px;font-size:12px;line-height:17px;color:#56646f;letter-spacing:0.159px;">Company&#x27;s Materia...</span>
<span class="t" style="left:36.20px;top:377.00px;font-size:12px;line-height:17px;color:#56646f;letter-spacing:0.169px;">Contracts</span>
<span class="t" style="left:36.20px;top:405.00px;font-size:12px;line-height:17px;color:#56646f;letter-spacing:0.078px;">Expense Reports</span>
<span class="t" style="left:36.20px;top:433.00px;font-size:12px;line-height:17px;color:#56646f;letter-spacing:0.102px;">Invoices</span>
<span class="t" style="left:36.20px;top:461.00px;font-size:12px;line-height:17px;color:#56646f;letter-spacing:0.142px;">Other Tasks</span>
<span class="t" style="left:36.20px;top:489.00px;font-size:12px;line-height:17px;color:#56646f;letter-spacing:0.070px;">Payroll Requests</span>
<span class="t" style="left:36.20px;top:517.00px;font-size:12px;line-height:17px;color:#27313b;letter-spacing:0.065px;">Purchase Requests</span>
<span class="t" style="left:36.20px;top:545.00px;font-size:12px;line-height:17px;color:#56646f;letter-spacing:0.020px;">Requests to issue M..</span>
<span class="t" style="left:36.20px;top:573.00px;font-size:12px;line-height:17px;color:#56646f;letter-spacing:0.147px;">Suppliers and Cont...</span>
<span class="t" style="left:36.20px;top:601.00px;font-size:12px;line-height:17px;color:#56646f;letter-spacing:0.018px;">Travel Requests</span>
<span class="t" style="left:38.60px;top:628.00px;font-size:12.5px;line-height:18px;color:#56646f;letter-spacing:0.058px;">New Application</span>
<span class="t" style="left:16.60px;top:663.00px;font-size:11.5px;line-height:16px;color:#1a1f26;font-weight:700;letter-spacing:-0.037px;">My Desktop</span>
<span class="t" style="left:16.60px;top:696.00px;font-size:11.5px;line-height:16px;color:#0e0e0e;font-weight:700;letter-spacing:0.007px;">Finance and Administration</span>
<span class="t" style="left:16.60px;top:728.00px;font-size:11.5px;line-height:16px;color:#2c3440;font-weight:700;letter-spacing:-0.178px;">Human Resources</span>
<span class="t" style="left:16.60px;top:760.00px;font-size:11.5px;line-height:16px;color:#2c3440;font-weight:700;letter-spacing:-0.074px;">IT Operations</span>
<span class="t" style="left:16.60px;top:792.00px;font-size:11.5px;line-height:16px;color:#2c3440;font-weight:700;letter-spacing:0.081px;">Marketing Operations</span>
<span class="t" style="left:41.50px;top:827.00px;font-size:12px;line-height:17px;color:#616d78;letter-spacing:0.074px;">Create Workspace</span>
<span class="t" style="left:205.00px;top:239.00px;font-size:12px;line-height:17px;color:#0b6ec2;letter-spacing:0.053px;">Active Purchase Requests</span>
<span class="t" style="left:403.50px;top:239.00px;font-size:12px;line-height:17px;color:#c4c4c4;letter-spacing:-0.047px;">Search in</span>
<span class="t" style="left:457.30px;top:239.00px;font-size:12px;line-height:17px;color:#cbcbcb;font-weight:700;letter-spacing:-0.138px;">Active Purchase Requests</span>
<span class="t" style="left:236.00px;top:272.00px;font-size:11.5px;line-height:16px;color:#222;font-weight:700;letter-spacing:0.125px;">Title</span>
<span class="t" style="left:648.80px;top:272.00px;font-size:11.5px;line-height:16px;color:#222;font-weight:700;letter-spacing:0.241px;">Department</span>
<span class="t" style="left:785.50px;top:272.00px;font-size:11.5px;line-height:16px;color:#222;font-weight:700;letter-spacing:-0.003px;">Supplier Name</span>
<span class="t" style="left:892.50px;top:272.00px;font-size:11.5px;line-height:16px;color:#222;font-weight:700;letter-spacing:0.058px;">Total Amount</span>
<span class="t" style="left:1013.80px;top:272.00px;font-size:11.5px;line-height:16px;color:#222;font-weight:700;letter-spacing:-0.050px;">Current Status</span>
<span class="t" style="left:1108.80px;top:272.00px;font-size:11.5px;line-height:16px;color:#222;font-weight:700;letter-spacing:-0.209px;">Current Assignee</span>
<span class="t" style="left:203.00px;top:299.00px;font-size:11px;line-height:15px;color:#7a858f;font-weight:700;letter-spacing:0.042px;">Current Status: Purchase Order Creation (1 item)</span>
<span class="t" style="left:203.00px;top:351.00px;font-size:11px;line-height:15px;color:#7a858f;font-weight:700;letter-spacing:-0.017px;">Current Status: Purchase Request Creation (7 items)</span>
<span class="t" style="left:203.00px;top:559.00px;font-size:11px;line-height:15px;color:#7a858f;font-weight:700;">Current Status: Purchase Request is Under Consideration (1 item)</span>
<span class="t" style="left:203.00px;top:611.00px;font-size:11px;line-height:15px;color:#7a858f;font-weight:700;letter-spacing:0.030px;">Current Status: Verification of Purchase Order (3 items)</span>
<span class="t" style="left:237.50px;top:324.00px;font-size:11.5px;line-height:16px;color:#2c3238;letter-spacing:0.130px;">Paper for printing</span>
<span class="t" style="left:657.00px;top:324.00px;font-size:11.5px;line-height:16px;color:#2c3238;letter-spacing:0.066px;">department.values.soluti...</span>
<span class="t" style="left:1028.60px;top:324.00px;font-size:11.5px;line-height:16px;color:#2c3238;letter-spacing:-0.204px;">Purchase Order ...</span>
<span class="t" style="left:1124.00px;top:324.00px;font-size:11.5px;line-height:16px;color:#2c3238;letter-spacing:-0.041px;">Anthony Black</span>
<span class="t" style="left:237.50px;top:376.00px;font-size:11.5px;line-height:16px;color:#2c3238;letter-spacing:-0.043px;">Accounting</span>
<span class="t" style="left:657.00px;top:376.00px;font-size:11.5px;line-height:16px;color:#2c3238;letter-spacing:0.066px;">department.values.soluti...</span>
<span class="t" style="left:1028.60px;top:376.00px;font-size:11.5px;line-height:16px;color:#2c3238;letter-spacing:-0.295px;">Purchase Reque...</span>
<span class="t" style="left:1124.00px;top:376.00px;font-size:11.5px;line-height:16px;color:#2c3238;letter-spacing:-0.041px;">Anthony Black</span>
<span class="t" style="left:237.50px;top:402.00px;font-size:11.5px;line-height:16px;color:#2c3238;letter-spacing:0.012px;">Real Time Monitoring</span>
<span class="t" style="left:657.00px;top:402.00px;font-size:11.5px;line-height:16px;color:#2c3238;letter-spacing:0.066px;">department.values.soluti...</span>
<span class="t" style="left:1028.60px;top:402.00px;font-size:11.5px;line-height:16px;color:#2c3238;letter-spacing:-0.295px;">Purchase Reque...</span>
<span class="t" style="left:1124.00px;top:402.00px;font-size:11.5px;line-height:16px;color:#2c3238;letter-spacing:-0.041px;">Anthony Black</span>
<span class="t" style="left:237.50px;top:428.00px;font-size:11.5px;line-height:16px;color:#2c3238;letter-spacing:0.089px;">Network hardware</span>
<span class="t" style="left:657.00px;top:428.00px;font-size:11.5px;line-height:16px;color:#2c3238;letter-spacing:0.066px;">department.values.soluti...</span>
<span class="t" style="left:1028.60px;top:428.00px;font-size:11.5px;line-height:16px;color:#2c3238;letter-spacing:-0.295px;">Purchase Reque...</span>
<span class="t" style="left:237.50px;top:454.00px;font-size:11.5px;line-height:16px;color:#2c3238;letter-spacing:-0.373px;">Office PBX</span>
<span class="t" style="left:657.00px;top:454.00px;font-size:11.5px;line-height:16px;color:#2c3238;letter-spacing:0.096px;">IT Department</span>
<span class="t" style="left:1028.60px;top:454.00px;font-size:11.5px;line-height:16px;color:#2c3238;letter-spacing:-0.295px;">Purchase Reque...</span>
<span class="t" style="left:237.50px;top:480.00px;font-size:11.5px;line-height:16px;color:#1d1d1d;font-weight:700;letter-spacing:-0.055px;">Data Recovery Software</span>
<span class="t" style="left:657.00px;top:480.00px;font-size:11.5px;line-height:16px;color:#1d1d1d;font-weight:700;letter-spacing:0.084px;">department.values.sol...</span>
<span class="t" style="left:1028.60px;top:480.00px;font-size:11.5px;line-height:16px;color:#1d1d1d;font-weight:700;letter-spacing:-0.220px;">Purchase Requ...</span>
<span class="t" style="left:237.50px;top:506.00px;font-size:11.5px;line-height:16px;color:#2c3238;letter-spacing:0.329px;">Monitor</span>
<span class="t" style="left:657.00px;top:506.00px;font-size:11.5px;line-height:16px;color:#2c3238;letter-spacing:0.066px;">department.values.soluti...</span>
<span class="t" style="left:797.30px;top:506.00px;font-size:11.5px;line-height:16px;color:#2c3238;letter-spacing:-0.345px;">Ducaka</span>
<span class="t" style="left:905.20px;top:506.00px;font-size:11.5px;line-height:16px;color:#2c3238;letter-spacing:-0.198px;">356.00</span>
<span class="t" style="left:1028.60px;top:506.00px;font-size:11.5px;line-height:16px;color:#2c3238;letter-spacing:-0.295px;">Purchase Reque...</span>
<span class="t" style="left:237.50px;top:532.00px;font-size:11.5px;line-height:16px;color:#1d1d1d;font-weight:700;letter-spacing:0.013px;">Color printer</span>
<span class="t" style="left:657.00px;top:532.00px;font-size:11.5px;line-height:16px;color:#1d1d1d;font-weight:700;letter-spacing:0.084px;">department.values.sol...</span>
<span class="t" style="left:797.30px;top:532.00px;font-size:11.5px;line-height:16px;color:#1d1d1d;font-weight:700;letter-spacing:-0.149px;">Ducaka</span>
<span class="t" style="left:905.20px;top:532.00px;font-size:11.5px;line-height:16px;color:#1d1d1d;font-weight:700;letter-spacing:-0.067px;">1100.00</span>
<span class="t" style="left:1028.60px;top:532.00px;font-size:11.5px;line-height:16px;color:#1d1d1d;font-weight:700;letter-spacing:-0.220px;">Purchase Requ...</span>
<span class="t" style="left:237.50px;top:584.00px;font-size:11.5px;line-height:16px;color:#2c3238;letter-spacing:-0.400px;">VGA Cable</span>
<span class="t" style="left:657.00px;top:584.00px;font-size:11.5px;line-height:16px;color:#2c3238;letter-spacing:0.066px;">department.values.soluti...</span>
<span class="t" style="left:1028.60px;top:584.00px;font-size:11.5px;line-height:16px;color:#2c3238;letter-spacing:-0.295px;">Purchase Reque...</span>
<span class="t" style="left:1124.00px;top:584.00px;font-size:11.5px;line-height:16px;color:#2c3238;letter-spacing:-0.041px;">Anthony Black</span>
<span class="t" style="left:237.50px;top:636.00px;font-size:11.5px;line-height:16px;color:#2c3238;letter-spacing:0.064px;">Accounting software installation</span>
<span class="t" style="left:657.00px;top:636.00px;font-size:11.5px;line-height:16px;color:#2c3238;letter-spacing:0.004px;">Main Office</span>
<span class="t" style="left:797.30px;top:636.00px;font-size:11.5px;line-height:16px;color:#2c3238;letter-spacing:-0.324px;">JoDihhe</span>
<span class="t" style="left:905.20px;top:636.00px;font-size:11.5px;line-height:16px;color:#2c3238;letter-spacing:-0.306px;">6</span>
<span class="t" style="left:1028.60px;top:636.00px;font-size:11.5px;line-height:16px;color:#2c3238;letter-spacing:0.009px;">Verification of P...</span>
<span class="t" style="left:1124.00px;top:636.00px;font-size:11.5px;line-height:16px;color:#2c3238;letter-spacing:-0.041px;">Anthony Black</span>
<span class="t" style="left:237.50px;top:662.00px;font-size:11.5px;line-height:16px;color:#2c3238;letter-spacing:0.035px;">Printer</span>
<span class="t" style="left:657.00px;top:662.00px;font-size:11.5px;line-height:16px;color:#2c3238;letter-spacing:0.066px;">department.values.soluti...</span>
<span class="t" style="left:797.30px;top:662.00px;font-size:11.5px;line-height:16px;color:#2c3238;letter-spacing:-0.345px;">Ducaka</span>
<span class="t" style="left:905.20px;top:662.00px;font-size:11.5px;line-height:16px;color:#2c3238;letter-spacing:-0.198px;">250.00</span>
<span class="t" style="left:1028.60px;top:662.00px;font-size:11.5px;line-height:16px;color:#2c3238;letter-spacing:0.009px;">Verification of P...</span>
<span class="t" style="left:1124.00px;top:662.00px;font-size:11.5px;line-height:16px;color:#2c3238;letter-spacing:-0.041px;">Anthony Black</span>
<span class="t" style="left:237.50px;top:688.00px;font-size:11.5px;line-height:16px;color:#1d1d1d;font-weight:700;letter-spacing:-0.043px;">Printer service</span>
<span class="t" style="left:657.00px;top:688.00px;font-size:11.5px;line-height:16px;color:#1d1d1d;font-weight:700;letter-spacing:0.084px;">department.values.sol...</span>
<span class="t" style="left:797.30px;top:688.00px;font-size:11.5px;line-height:16px;color:#1d1d1d;font-weight:700;letter-spacing:-0.400px;">Fakod</span>
<span class="t" style="left:905.20px;top:688.00px;font-size:11.5px;line-height:16px;color:#1d1d1d;font-weight:700;letter-spacing:-0.151px;">35.00</span>
<span class="t" style="left:1028.60px;top:688.00px;font-size:11.5px;line-height:16px;color:#1d1d1d;font-weight:700;letter-spacing:0.031px;">Verification of ...</span>
<span class="t" style="left:1124.00px;top:688.00px;font-size:11.5px;line-height:16px;color:#1d1d1d;font-weight:700;letter-spacing:-0.041px;">Anthony Black</span>
</body></html>
